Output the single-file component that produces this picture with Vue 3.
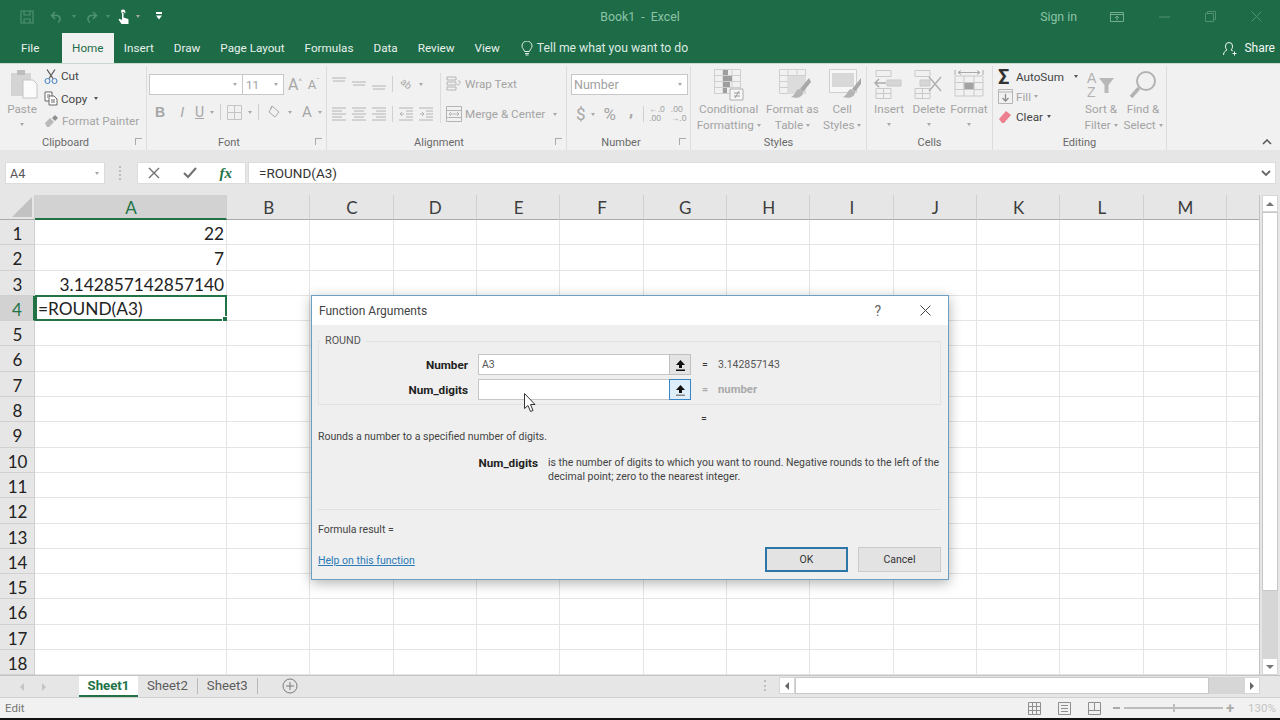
<script setup>
const columns = ['A', 'B', 'C', 'D', 'E', 'F', 'G', 'H', 'I', 'J', 'K', 'L', 'M', '']
const rows = Array.from({ length: 18 }, (_, i) => i + 1)
const values = { A1: '22', A2: '7', A3: '3.142857142857140' }
const tabs = ['Insert', 'Draw', 'Page Layout', 'Formulas', 'Data', 'Review', 'View']
</script>

<template>
  <div class="app">
    <header class="titlebar">
      <div class="qat">
        <svg class="q1" width="14" height="14" viewBox="0 0 14 14" fill="none" stroke="#4f9173" stroke-width="1.2"><path d="M1 1h12v12H1zM4 1v4h6V1M4 13V9h6v4" /></svg>
        <svg class="q2" width="14" height="12" viewBox="0 0 14 12" fill="none" stroke="#4f9173" stroke-width="1.6"><path d="M5 1 1.500 4.500 5 8M2 4.500h6a4 4 0 0 1 0 7" /></svg>
        <i class="caret dim q3"></i>
        <svg class="q4" width="14" height="12" viewBox="0 0 14 12" fill="none" stroke="#4f9173" stroke-width="1.6"><path d="M9 1l3.500 3.500L9 8M12 4.500H6a4 4 0 0 0 0 7" /></svg>
        <i class="caret dim q5"></i>
        <svg class="q6" width="12" height="16" viewBox="0 0 12 16" fill="#fff"><path d="M4 1.500a2.500 2.500 0 0 1 4 0l.5 2.500-1 .5V3.500a1.500 1.500 0 0 0-2 0v1l-1-.5zM5 4h1.500v4.500l4 1.200c.8.300 1 .8 1 1.500V15H4.500L1.500 10.500l1-.8L5 11z" /></svg>
        <i class="caret q7"></i>
        <svg class="q8" width="8" height="8" viewBox="0 0 8 8" fill="#fff"><path d="M1 0h6v2H1zM1 3.500h6L4 7.500z" /></svg>
      </div>
      <div class="doc-title">Book1 &nbsp;-&nbsp; Excel</div>
      <div class="win">
        <span class="sign">Sign in</span>
        <svg class="w1" width="14" height="10" viewBox="0 0 14 10" fill="none" stroke="#72ad92"><path d="M.5.500h13v9H.5zM.5 2.500h13M7 8.500V4M5 6l2-2 2 2" /></svg>
        <svg class="w2" width="11" height="2" viewBox="0 0 11 2"><path d="M0 1h11" stroke="#4f9173" /></svg>
        <svg class="w3" width="11" height="11" viewBox="0 0 11 11" fill="none" stroke="#4f9173"><path d="M.5 2.500h8v8h-8zM2.500 2.500v-2h8v8h-2" /></svg>
        <svg class="w4" width="11" height="11" viewBox="0 0 11 11" fill="none" stroke="#4f9173"><path d="M.5.500l10 10M10.500.500l-10 10" /></svg>
      </div>
    </header>

    <nav class="tabs">
      <span class="tab file">File</span>
      <span class="tab home">Home</span>
      <span v-for="t in tabs" :key="t" class="tab">{{ t }}</span>
      <span class="tell">
        <svg width="12" height="15" viewBox="0 0 12 15" fill="none" stroke="#dcebe3"><path d="M3.500 10.500C3 8 1 7.500 1 5a5 5 0 0 1 10 0c0 2.500-2 3-2.500 5.500zM4 12.500h4M4.500 14h3" /></svg>
        Tell me what you want to do
      </span>
      <span class="share">
        <svg width="15" height="15" viewBox="0 0 15 15" fill="none" stroke="#eef6f2"><path d="M.5 14c0-3 2-4.500 3.500-5C2.800 8 2.500 6.500 2.500 5a3.500 3.500 0 0 1 7 0c0 1.500-.3 3-1.500 4 1 .3 1.500.7 2 1M11.500 10.500v4M9.500 12.500h4" /></svg>
        Share
      </span>
    </nav>

    <section class="ribbon">
      <div class="group clipboard">
        <div class="body">
          <div class="big paste">
            <svg width="28" height="32" viewBox="0 0 28 32"><path d="M1 4h20v23H1z" fill="#d4d4d4" /><path d="M7 1h8v5H7z" fill="#bdbdbd" /><path d="M13 11h10l4 4v14H13z" fill="#fbfbfb" stroke="#c4c4c4" /></svg>
            <span class="off">Paste</span>
            <i class="caret off-caret"></i>
          </div>
          <div class="stack">
            <div class="mini on">
              <svg width="14" height="15" viewBox="0 0 14 15" fill="none" stroke="#5a5a5a"><path d="M3 .500l6 9M11 .500l-6 9" stroke-width="1.300" /><circle cx="3.500" cy="12" r="2.500" stroke="#3f7fc1" /><circle cx="10.500" cy="12" r="2.500" stroke="#3f7fc1" /></svg>
              Cut
            </div>
            <div class="mini on">
              <svg width="14" height="15" viewBox="0 0 14 15" fill="#fff" stroke="#666"><path d="M1 1h7v9H1z" /><path d="M5 5h5l3 3v6H5z" /><path d="M3 4h3M3 6h1M7 9h4M7 11h4" /></svg>
              Copy <i class="caret dark copy-caret"></i>
            </div>
            <div class="mini off">
              <svg width="15" height="14" viewBox="0 0 15 14"><path d="M1 9l5-5 4 4-5 5H3z" fill="#b9b9b9" /><path d="M8 4l3-3 3 3-3 3z" fill="#8f8f8f" /></svg>
              Format Painter
            </div>
          </div>
        </div>
        <div class="label">Clipboard<i class="launch"></i></div>
      </div>

      <div class="group font">
        <div class="body col">
          <div class="row r1">
            <div class="combo c-font"><i class="caret"></i></div>
            <div class="combo c-size"><span>11</span><i class="caret"></i></div>
            <span class="gl a-up">A<sup>^</sup></span>
            <span class="gl a-down">A<sup>ˇ</sup></span>
          </div>
          <div class="row r2">
            <b class="gl fb">B</b>
            <em class="gl fi">I</em>
            <u class="gl fu">U</u>
            <i class="caret"></i>
            <i class="sep"></i>
            <svg width="15" height="15" viewBox="0 0 15 15" fill="none" stroke="#c4c4c4"><path d="M.5.500h14v14H.5zM7.500.500v14M.5 7.500h14" /></svg>
            <i class="caret"></i>
            <i class="sep"></i>
            <svg class="bucket" width="14" height="14" viewBox="0 0 14 14" fill="none" stroke="#aaa"><path d="M4 1l7 6-4 5-6-5zM4 1l-1 3" /></svg>
            <i class="caret"></i>
            <span class="gl fa">A</span>
            <i class="caret"></i>
          </div>
        </div>
        <div class="label">Font<i class="launch"></i></div>
      </div>

      <div class="group align">
        <div class="body">
          <div class="col al-left">
            <div class="row al-r1">
              <svg class="ico-al" viewBox="0 0 14 14"><path d="M0 1h14M1 4h12" /></svg>
              <svg class="ico-al" viewBox="0 0 14 14"><path d="M0 5h14M1 8h12" /></svg>
              <svg class="ico-al" viewBox="0 0 14 14"><path d="M0 9h14M1 12h12" /></svg>
              <i class="sep"></i>
              <span class="orient">ab</span>
              <i class="caret"></i>
            </div>
            <div class="row al-r2">
              <svg class="ico-al" viewBox="0 0 14 14"><path d="M0 1h14M0 4h10M0 7h14M0 10h10M0 13h14" /></svg>
              <svg class="ico-al" viewBox="0 0 14 14"><path d="M0 1h14M2 4h10M0 7h14M2 10h10M0 13h14" /></svg>
              <svg class="ico-al" viewBox="0 0 14 14"><path d="M0 1h14M4 4h10M0 7h14M4 10h10M0 13h14" /></svg>
              <i class="sep"></i>
              <svg class="ico-al" viewBox="0 0 14 14"><path d="M0 1h14M7 4h7M7 7h7M7 10h7M0 13h14M5 7H1M3 5 1 7l2 2" /></svg>
              <svg class="ico-al" viewBox="0 0 14 14"><path d="M0 1h14M7 4h7M7 7h7M7 10h7M0 13h14M1 7h4M3 5l2 2-2 2" /></svg>
            </div>
          </div>
          <i class="vline"></i>
          <div class="col al-right">
            <div class="mini off wrap">
              <svg width="16" height="16" viewBox="0 0 16 16" fill="none" stroke="#b4b4b4"><path d="M1 1h9v3H1zM1 6h9v3H1zM1 11h9v3H1zM12 5c3-1 3 4-1 4" /></svg>
              Wrap Text
            </div>
            <div class="mini off merge">
              <svg width="16" height="16" viewBox="0 0 16 16" fill="none" stroke="#b4b4b4"><path d="M.5.500h15v15H.5zM.5 4.500h15M.5 11.500h15M3 8h10M5 6 3 8l2 2M11 6l2 2-2 2" /></svg>
              Merge &amp; Center <i class="caret merge-caret"></i>
            </div>
          </div>
        </div>
        <div class="label">Alignment<i class="launch"></i></div>
      </div>

      <div class="group number">
        <div class="body col">
          <div class="combo c-num"><span>Number</span><i class="caret"></i></div>
          <div class="row num-r2">
            <span class="gl dollar">$</span>
            <i class="caret"></i>
            <span class="gl pct">%</span>
            <b class="gl comma">,</b>
            <i class="sep"></i>
            <span class="decs"><span>←.0<br />.00</span><span>.00<br />→.0</span></span>
          </div>
        </div>
        <div class="label">Number<i class="launch"></i></div>
      </div>

      <div class="group styles">
        <div class="body">
          <div class="big b-cond">
            <svg width="30" height="32" viewBox="0 0 30 32"><path d="M.5.500h26v24H.5zM.5 6.500h26M.5 12.500h26M.5 18.500h26M9 .500v24M18 .500v24" fill="none" stroke="#cfcfcf" /><path d="M9 1h5v5H9zM9 7h9v5H9zM9 13h7v5H9zM9 19h4v5H9z" fill="#9e9e9e" /><path d="M16 20h13v11H16z" fill="#f6f6f6" stroke="#b0b0b0" /><path d="M20 24h6M20 27h6M25 22l-4 7" stroke="#9a9a9a" fill="none" /></svg>
            <span class="off">Conditional</span>
            <span class="off">Formatting <i class="caret"></i></span>
          </div>
          <div class="big b-table">
            <svg width="32" height="32" viewBox="0 0 32 32"><path d="M.5.500h26v24H.5zM.5 6.500h26M.5 12.500h26M.5 18.500h26M9 .500v24M18 .500v24" fill="none" stroke="#cfcfcf" /><path d="M9 7h18v18H9z" fill="#dcdcdc" /><path d="M30 9 21 20l3 3 8-10z" fill="#a8a8a8" /><path d="M20 20c-4 1-3 6-8 8 6 2 12 0 12-5z" fill="#b4b4b4" /></svg>
            <span class="off">Format as</span>
            <span class="off">Table <i class="caret"></i></span>
          </div>
          <div class="big b-cell">
            <svg width="32" height="32" viewBox="0 0 32 32"><path d="M.5.500h27v23H.5z" fill="#f6f6f6" stroke="#cfcfcf" /><path d="M3 4h22v14H3z" fill="#d8d8d8" /><path d="M32 9 23 20l3 3 6-8z" fill="#a8a8a8" /><path d="M22 20c-4 1-3 6-8 8 6 2 12 0 12-5z" fill="#b4b4b4" /></svg>
            <span class="off">Cell</span>
            <span class="off">Styles <i class="caret"></i></span>
          </div>
        </div>
        <div class="label">Styles</div>
      </div>

      <div class="group cells">
        <div class="body">
          <div class="big b-ins">
            <svg width="30" height="30" viewBox="0 0 30 30" fill="none" stroke="#c9c9c9"><path d="M2 .500h15v6H2zM2 18.500h15v10H2zM2 23.500h15M9.500 18.500v10" /><path d="M13 10h14v6H13z" fill="#d6d6d6" /><path d="M12 13H1M5 9l-4 4 4 4" stroke="#aaa" stroke-width="1.500" /></svg>
            <span class="off">Insert</span>
            <i class="caret off-caret"></i>
          </div>
          <div class="big b-del">
            <svg width="30" height="30" viewBox="0 0 30 30" fill="none" stroke="#c9c9c9"><path d="M1 .500h15v6H1zM1 18.500h15v10H1zM1 23.500h15M8.500 18.500v10" /><path d="M6 10h10v6H6z" fill="#d6d6d6" /><path d="M15 7l12 14M27 7 15 21" stroke="#b0b0b0" stroke-width="1.500" /></svg>
            <span class="off">Delete</span>
            <i class="caret off-caret"></i>
          </div>
          <div class="big b-fmt">
            <svg width="30" height="31" viewBox="0 0 30 31" fill="none" stroke="#c9c9c9"><path d="M1 .500v5M29 .500v5M4 3h22M7 1 4 3l3 2M23 1l3 2-3 2" stroke="#aaa" /><path d="M1 6.500h28v20H1zM1 13h28M1 20h28M10 6.500v20M20 6.500v20" /><path d="M10 13h10v7H10z" fill="#a2a2a2" /></svg>
            <span class="off">Format</span>
            <i class="caret off-caret"></i>
          </div>
        </div>
        <div class="label">Cells</div>
      </div>

      <div class="group editing">
        <div class="body">
          <div class="stack ed-stack">
            <div class="mini on auto">
              <span class="sigma">Σ</span> AutoSum <i class="caret dark auto-caret"></i>
            </div>
            <div class="mini off fill">
              <svg width="15" height="15" viewBox="0 0 15 15" fill="none" stroke="#b4b4b4"><path d="M.5.500h14v14H.5zM.5 3h14" /><path d="M7.500 5v7M4.500 9l3 3 3-3" stroke="#8d8d8d" stroke-width="1.300" /></svg>
              Fill <i class="caret"></i>
            </div>
            <div class="mini on clear">
              <svg width="14" height="14" viewBox="0 0 14 14"><path d="M1 9l7-8 5 4-7 8H4z" fill="#ee7f8e" /></svg>
              Clear <i class="caret dark"></i>
            </div>
          </div>
          <div class="big b-sort">
            <svg width="30" height="30" viewBox="0 0 30 30"><text x="1" y="13" class="az">A</text><text x="1" y="27" class="az">Z</text><path d="M13 8h15l-5.500 7v8H18.500v-8z" fill="#b8b8b8" /></svg>
            <span class="off">Sort &amp;</span>
            <span class="off">Filter <i class="caret"></i></span>
          </div>
          <div class="big b-find">
            <svg width="28" height="30" viewBox="0 0 28 30" fill="none"><circle cx="17" cy="11" r="9" stroke="#b2b2b2" stroke-width="2" /><path d="M10 18 2 27" stroke="#b2b2b2" stroke-width="3.500" /></svg>
            <span class="off">Find &amp;</span>
            <span class="off">Select <i class="caret"></i></span>
          </div>
        </div>
        <div class="label">Editing</div>
      </div>

      <div class="ribbon-rest">
        <svg width="10" height="6" viewBox="0 0 10 6" fill="none" stroke="#555" stroke-width="1.500"><path d="M1 5l4-4 4 4" /></svg>
      </div>
    </section>

    <div class="formula-bar">
      <div class="name-box">A4<i class="caret"></i></div>
      <div class="grip"></div>
      <div class="fx-box">
        <svg width="12" height="12" viewBox="0 0 12 12" fill="none" stroke="#707070" stroke-width="1.400"><path d="M1 1l10 10M11 1 1 11" /></svg>
        <svg width="14" height="12" viewBox="0 0 14 12" fill="none" stroke="#707070" stroke-width="2"><path d="M1 6l4 4 8-9" /></svg>
        <span class="fx">fx</span>
      </div>
      <div class="formula-input">
        =ROUND(A3)
        <svg width="10" height="7" viewBox="0 0 10 7" fill="none" stroke="#666" stroke-width="1.800"><path d="M1 1l4 4 4-4" /></svg>
      </div>
    </div>

    <div class="sheet">
      <div class="grid">
        <div class="corner"><i></i></div>
        <div v-for="c in columns" :key="c" class="col-head" :class="{ sel: c === 'A' }">{{ c }}</div>
        <template v-for="r in rows" :key="r">
          <div class="row-head" :class="{ sel: r === 4 }">{{ r }}</div>
          <div v-for="c in columns" :key="c + r" class="cell" :class="{ active: c === 'A' && r === 4 }">
            <template v-if="c === 'A' && r === 4">=ROUND(A3)<i class="handle"></i></template>
            <template v-else>{{ values[c + r] }}</template>
          </div>
        </template>
      </div>
      <div class="vscroll">
        <div class="sbtn"><i class="tri up"></i></div>
        <div class="thumb"></div>
        <div class="track"></div>
        <div class="sbtn"><i class="tri down"></i></div>
      </div>
    </div>

    <div class="sheet-tabs">
      <div class="nav-arrows"><i class="tri left"></i><i class="tri right"></i></div>
      <span class="stab current">Sheet1</span>
      <span class="stab">Sheet2</span>
      <span class="stab">Sheet3</span>
      <svg class="plus" width="16" height="16" viewBox="0 0 16 16" fill="none" stroke="#7a7a7a"><circle cx="8" cy="8" r="7" /><path d="M8 4v8M4 8h8" /></svg>
      <div class="hscroll">
        <div class="grip"></div>
        <div class="hbtn"><i class="tri left dark"></i></div>
        <div class="hthumb"></div>
        <div class="htrack"></div>
        <div class="hbtn"><i class="tri right dark"></i></div>
      </div>
    </div>

    <footer class="status">
      <span>Edit</span>
      <div class="views">
        <svg width="13" height="13" viewBox="0 0 13 13" fill="none" stroke="#8f8f8f"><path d="M.5.500h12v12H.5zM4.500.500v12M8.500.500v12M.5 4.500h12M.5 8.500h12" /></svg>
        <svg width="13" height="13" viewBox="0 0 13 13" fill="none" stroke="#8f8f8f"><path d="M.5.500h12v12H.5zM3 3.500h7M3 6.500h7M3 9.500h7" /></svg>
        <svg width="13" height="13" viewBox="0 0 13 13" fill="none" stroke="#8f8f8f"><path d="M.5.500h12v12H.5zM.5 8.500h12M6.500.500v8" /></svg>
      </div>
      <div class="zoom">
        <i class="z-minus"></i>
        <div class="z-slider"><i></i></div>
        <span class="z-plus">+</span>
        <span class="z-val">130%</span>
      </div>
    </footer>
    <div class="screen-edge"></div>

    <div class="dialog">
      <div class="dlg-head">
        <span>Function Arguments</span>
        <span class="help">?</span>
        <svg width="11" height="11" viewBox="0 0 11 11" fill="none" stroke="#444"><path d="M.5.500l10 10M10.500.500l-10 10" /></svg>
      </div>
      <div class="dlg-body">
        <fieldset class="args">
          <legend>ROUND</legend>
          <div class="arg">
            <label>Number</label>
            <div class="arg-input">A3</div>
            <div class="ref-btn">
              <svg width="11" height="12" viewBox="0 0 11 12"><path d="M5.500 1 10 6H7v3H4V6H1zM1 10.500h9V12H1z" fill="#111" /></svg>
            </div>
            <span class="eq">=</span>
            <span class="val">3.142857143</span>
          </div>
          <div class="arg">
            <label>Num_digits</label>
            <div class="arg-input"></div>
            <div class="ref-btn focus">
              <svg width="11" height="12" viewBox="0 0 11 12"><path d="M5.500 1 10 6H7v3H4V6H1z" fill="#111" /><path d="M1 10.500h9V12H1z" fill="#888" /></svg>
            </div>
            <span class="eq grey">=</span>
            <span class="val grey">number</span>
          </div>
        </fieldset>
        <div class="total-eq">=</div>
        <p class="summary">Rounds a number to a specified number of digits.</p>
        <div class="detail">
          <b>Num_digits</b>
          <p>is the number of digits to which you want to round. Negative rounds to the left of the decimal point; zero to the nearest integer.</p>
        </div>
        <div class="divider"></div>
        <div class="result">Formula result =</div>
        <div class="dlg-foot">
          <a class="help-link">Help on this function</a>
          <button class="btn primary">OK</button>
          <button class="btn">Cancel</button>
        </div>
      </div>
    </div>

    <svg class="cursor" width="13" height="19" viewBox="0 0 13 19"><path d="M.5.500v15l3.500-3 2.500 6 2.500-1-2.500-6H11z" fill="#fff" stroke="#333" /></svg>
  </div>
</template>

<style>
html, body { margin: 0; padding: 0; background: #000; }
</style>

<style scoped>
.app {
  position: relative;
  width: 1280px;
  height: 720px;
  overflow: hidden;
  display: flex;
  flex-direction: column;
  font-family: Roboto, "Liberation Sans", sans-serif;
  font-size: 12px;
  color: #444;
  background: #e6e6e6;
}

/* shared bits */
.caret {
  display: inline-block;
  width: 0;
  height: 0;
  border: 2.5px solid transparent;
  border-top: 3px solid #a8a8a8;
  border-bottom: 0;
  vertical-align: middle;
}
.caret.dark { border-top-color: #555; }
.caret.dim { border-top-color: #4f9173; }
.sep { display: inline-block; width: 1px; height: 16px; background: #d0d0d0; }
.vline { display: block; width: 1px; height: 50px; background: #dcdcdc; }
.off { color: #a4a4a4; }
.on { color: #444; }
.gl { color: #a6a6a6; }

/* title bar */
.titlebar {
  height: 33px;
  background: #1e6b47;
  display: grid;
  grid-template-columns: 1fr auto 1fr;
  align-items: center;
  flex: none;
}
.qat { display: flex; align-items: center; padding-left: 20px; }
.q2 { margin-left: 16px; }
.q3 { margin-left: 8px; }
.q4 { margin-left: 8px; }
.q5 { margin-left: 8px; }
.q6 { margin-left: 7px; }
.q7 { margin-left: 7px; }
.q8 { margin-left: 15px; margin-top: -2px; }
.doc-title { color: #8cc4a9; font-size: 12.3px; }
.win { display: flex; align-items: center; justify-content: flex-end; padding-right: 18px; }
.sign { color: #8cc4a9; font-size: 12.3px; margin-right: 33px; }
.w2 { margin-left: 35px; }
.w3 { margin-left: 35px; }
.w4 { margin-left: 35px; }

/* tab row */
.tabs {
  height: 30px;
  background: #1e6b47;
  display: flex;
  align-items: center;
  flex: none;
  color: #e7f1ec;
  font-size: 11.7px;
}
.tab { height: 30px; line-height: 31px; padding: 0 10px; }
.file { margin-left: 11px; margin-right: 12.500px; }
.home { width: 52px; padding: 0; box-sizing: border-box; text-align: center; background: #f1f1f1; color: #1e6b47; }
.tell { display: flex; align-items: center; gap: 4px; margin-left: 11px; color: #dcebe3; font-size: 12.2px; }
.share { display: flex; align-items: center; gap: 6px; margin-left: auto; padding-right: 5px; color: #f1f7f4; font-size: 12px; }

/* ribbon */
.ribbon {
  height: 87px;
  background: #f1f1f1;
  border-top: 1px solid #c9d9d0;
  box-sizing: border-box;
  display: flex;
  flex: none;
  font-size: 11.7px;
}
.group {
  box-sizing: border-box;
  display: flex;
  flex-direction: column;
  border-right: 1px solid #dcdcdc;
  height: 84px;
  margin-top: 2px;
}
.body { flex: 1; display: flex; min-height: 0; }
.col { display: flex; flex-direction: column; }
.row { display: flex; align-items: center; }
.label { position: relative; height: 16px; line-height: 17px; text-align: center; color: #6a6a6a; font-size: 11px; }
.clipboard .label, .font .label, .align .label, .number .label { padding-right: 15px; }
.launch {
  position: absolute;
  right: 4px;
  top: 4px;
  width: 6px;
  height: 6px;
  border-left: 1px solid #aaa;
  border-top: 1px solid #aaa;
}
.big { display: flex; flex-direction: column; align-items: center; line-height: 16px; white-space: nowrap; }
.big svg { height: 32px; flex: none; }
.off-caret { margin-top: 6px; }
.stack { display: flex; flex-direction: column; }
.mini { display: flex; align-items: center; gap: 3px; white-space: nowrap; }

.clipboard { width: 147px; }
.paste { width: 44px; margin-top: 3px; }
.paste svg { margin-left: 4px; }
.clipboard .stack { padding-top: 1px; gap: 4.5px; }
.clipboard .mini { height: 18px; }
.copy-caret { margin-left: 4px; }

.font { width: 180px; }
.font .body { padding: 8px 0 0 2px; }
.r1 { height: 21px; }
.combo {
  position: relative;
  box-sizing: border-box;
  background: #fff;
  border: 1px solid #c8c8c8;
  height: 21px;
  display: flex;
  align-items: center;
  justify-content: flex-end;
  padding-right: 5px;
  color: #a0a0a0;
}
.c-font { width: 94px; }
.c-size { width: 41px; border-left: 0; justify-content: space-between; padding-left: 3px; }
.a-up { font-size: 16px; margin-left: 4px; }
.a-down { font-size: 13px; margin-left: 6px; }
.gl sup { font-size: 8px; line-height: 0; }
.r2 { margin-top: 8px; height: 18px; padding-left: 6px; gap: 6px; }
.fb { font-size: 14px; font-family: "Liberation Sans", sans-serif; }
.fi { font-size: 14px; font-family: "Liberation Sans", sans-serif; margin-left: 9px; }
.fu { font-size: 14px; margin-left: 5px; }
.bucket { margin-left: 3px; }
.fa { font-size: 15px; margin-left: 4px; }

.align { width: 240px; }
.align .body { padding-left: 5px; padding-top: 7px; }
.al-left { width: 108px; }
.al-r1 { height: 22px; gap: 6px; }
.al-r2 { height: 22px; gap: 6px; margin-top: 8px; }
.ico-al { width: 14px; height: 14px; fill: none; stroke: #b4b4b4; stroke-width: 1; }
.orient { display: block; width: 14px; text-align: center; font-size: 10px; line-height: 14px; color: #a6a6a6; transform: rotate(40deg); }
.al-right { padding-left: 5px; }
.wrap { height: 22px; }
.merge { height: 22px; margin-top: 8px; }
.merge-caret { margin-left: 5px; }

.number { width: 124px; }
.number .body { padding: 8px 0 0 4px; }
.c-num { width: 117px; justify-content: space-between; padding-left: 2px; font-size: 12.5px; }
.num-r2 { margin-top: 8px; padding-left: 5px; gap: 5px; height: 22px; }
.dollar { font-size: 17px; }
.pct { font-size: 17px; margin-left: 4px; }
.comma { font-size: 17px; margin-left: 8px; margin-top: -8px; }
.num-r2 .sep { margin-left: 5px; }
.decs { display: flex; flex: none; gap: 6px; font-family: "Liberation Sans", sans-serif; font-size: 8.5px; line-height: 9px; color: #a0a0a0; white-space: nowrap; }

.styles { width: 176px; }
.styles .body { padding-top: 3px; }
.b-cond { width: 76px; }
.b-table { width: 52px; }
.b-cell { width: 48px; }
.b-table svg, .b-cell svg { margin-left: 6px; }

.cells { width: 126px; }
.cells .body { padding-top: 3px; padding-left: 2px; }
.cells .big { width: 40px; }

.editing { width: 174px; }
.editing .body { padding-top: 3px; padding-left: 5px; }
.ed-stack { width: 80px; margin-top: -2px; gap: 1px; }
.auto { height: 19px; gap: 5px; }
.auto-caret { margin-left: 5px; }
.sigma { color: #333; font-size: 20px; line-height: 18px; font-weight: 700; width: 13px; }
.fill { height: 19px; gap: 3px; }
.clear { height: 19px; gap: 4px; }
.b-sort { width: 46px; }
.b-find { width: 38px; }
.az { fill: #b2b2b2; font-size: 14px; font-family: "Liberation Sans", sans-serif; }
.ribbon-rest { flex: 1; display: flex; justify-content: flex-end; align-items: flex-end; padding: 0 8px 5px 0; }

/* formula bar */
.formula-bar {
  height: 45px;
  box-sizing: border-box;
  padding: 12px 4px 11px 5px;
  display: flex;
  align-items: stretch;
  flex: none;
  background: #e6e6e6;
  font-size: 12.5px;
}
.name-box {
  width: 100px;
  box-sizing: border-box;
  background: #fff;
  border: 1px solid #dcdcdc;
  display: flex;
  align-items: center;
  justify-content: space-between;
  padding: 0 5px 0 4px;
  color: #555;
}
.grip { width: 2px; margin: 4px 14px; border-left: 2px dotted #bdbdbd; }
.fx-box {
  width: 109px;
  box-sizing: border-box;
  background: #fff;
  border: 1px solid #dcdcdc;
  display: flex;
  align-items: center;
  justify-content: space-between;
  padding: 0 13px 0 10px;
}
.fx { font-family: "Liberation Serif", serif; font-style: italic; color: #217346; font-size: 15px; font-weight: 700; }
.formula-input {
  flex: 1;
  margin-left: 2px;
  background: #fff;
  border: 1px solid #dcdcdc;
  display: flex;
  align-items: center;
  justify-content: space-between;
  padding: 0 4px 0 10px;
  color: #333;
  font-size: 13.5px;
}

/* sheet */
.sheet { height: 480px; display: flex; flex: none; background: #fff; }
.grid {
  width: 1260px;
  height: 480px;
  overflow: hidden;
  display: grid;
  grid-template-columns: 35px 192px repeat(12, 83.33px) 33px;
  grid-template-rows: 25px repeat(18, 25.3px);
  font-family: Lato, "Liberation Sans", sans-serif;
  color: #222;
  box-sizing: border-box;
  border-right: 1px solid #c4c4c4;
}
.corner { background: #e6e6e6; border-right: 1px solid #cfcfcf; border-bottom: 1px solid #aaa; position: relative; }
.corner i {
  position: absolute;
  right: 2px;
  bottom: 2px;
  width: 0;
  height: 0;
  border-left: 20px solid transparent;
  border-bottom: 20px solid #c2c2c2;
}
.col-head {
  background: #e6e6e6;
  border-right: 1px solid #d0d0d0;
  border-bottom: 1px solid #aaa;
  box-sizing: border-box;
  text-align: center;
  font-size: 17px;
  line-height: 25px;
  color: #3d3d3d;
  padding-left: 1px;
}
.col-head.sel { background: #d2d2d2; color: #217346; border-bottom: 2px solid #217346; }
.row-head {
  background: #e6e6e6;
  border-right: 1px solid #cfcfcf;
  border-bottom: 1px solid #d0d0d0;
  box-sizing: border-box;
  text-align: center;
  font-size: 17px;
  line-height: 27px;
  padding-left: 1px;
}
.row-head.sel { background: #d2d2d2; color: #217346; border-right: 2px solid #217346; }
.cell {
  position: relative;
  box-sizing: border-box;
  border-right: 1px solid #e4e4e4;
  border-bottom: 1px solid #e4e4e4;
  text-align: right;
  padding-right: 2px;
  font-size: 17.3px;
  line-height: 27px;
  white-space: nowrap;
}
.cell.active {
  border: 2px solid #217346;
  text-align: left;
  padding: 0 0 0 1px;
  line-height: 24px;
  margin-top: -1px;
}
.handle {
  position: absolute;
  right: -3px;
  bottom: -3px;
  width: 4px;
  height: 4px;
  background: #217346;
  border: 1px solid #fff;
}
.vscroll {
  flex: 1;
  background: #e6e6e6;
  padding: 0 2px 0 2px;
  display: flex;
  flex-direction: column;
}
.sbtn {
  height: 17px;
  background: #fff;
  border: 1px solid #d6d6d6;
  box-sizing: border-box;
  display: flex;
  align-items: center;
  justify-content: center;
}
.thumb { height: 379px; background: #fff; border: 1px solid #c8c8c8; box-sizing: border-box; }
.track { flex: 1; background: #d6d6d6; }
.tri { display: block; width: 0; height: 0; border: 4px solid transparent; }
.tri.up { border-bottom: 4px solid #777; border-top: 0; }
.tri.down { border-top: 4px solid #777; border-bottom: 0; }
.tri.left { border-right: 4px solid #c4c4c4; border-left: 0; }
.tri.right { border-left: 4px solid #c4c4c4; border-right: 0; }
.tri.left.dark { border-right-color: #666; }
.tri.right.dark { border-left-color: #666; }

/* sheet tabs */
.sheet-tabs {
  height: 22px;
  flex: none;
  display: flex;
  align-items: stretch;
  background: #e6e6e6;
  border-top: 1px solid #c4c4c4;
  box-sizing: border-box;
  font-size: 13.2px;
  color: #5c5c5c;
}
.nav-arrows { width: 79px; box-sizing: border-box; display: flex; align-items: center; gap: 18px; padding-left: 20px; }
.stab {
  padding: 0 9px;
  line-height: 20px;
  position: relative;
}
.stab + .stab { border-right: 1px solid #b8b8b8; margin: 2px 0 3px; line-height: 16px; }
.stab.current {
  width: 59px;
  box-sizing: border-box;
  text-align: center;
  padding: 0;
  background: #fff;
  color: #217346;
  font-weight: 700;
  border-bottom: 2px solid #217346;
}
.plus { margin: 2px 0 0 24px; }
.hscroll { margin-left: auto; width: 520px; padding-right: 20px; box-sizing: border-box; display: flex; align-items: stretch; padding-top: 1px; padding-bottom: 3px; }
.hscroll .grip { margin: 3px 11px 3px auto; }
.hbtn { width: 16px; flex: none; background: #fff; border: 1px solid #d6d6d6; box-sizing: border-box; display: flex; align-items: center; justify-content: center; }
.hthumb { width: 414px; flex: none; background: #fff; border: 1px solid #c8c8c8; box-sizing: border-box; }
.htrack { width: 35px; flex: none; background: #d6d6d6; }

/* status bar */
.status {
  height: 21px;
  flex: none;
  box-sizing: border-box;
  background: #f1f1f1;
  border-top: 1px solid #d0d0d0;
  display: flex;
  align-items: center;
  padding-left: 5px;
  font-size: 11.5px;
  color: #777;
}
.views { display: flex; gap: 17px; margin-left: auto; }
.zoom { display: flex; align-items: center; margin-left: 12px; width: 167px; }
.z-minus { width: 7px; height: 2px; background: #aaa; }
.z-slider { position: relative; width: 99px; height: 2px; background: #bdbdbd; margin-left: 4px; }
.z-slider i { position: absolute; left: 49px; top: -3px; width: 2px; height: 8px; background: #bdbdbd; }
.z-plus { font-size: 15px; color: #aaa; margin-left: 3px; font-weight: 700; width: 12px; }
.z-val { color: #c4c4c4; margin-left: 10px; font-size: 11.5px; }
.screen-edge { flex: 1; background: #111; }

/* dialog */
.dialog {
  position: absolute;
  left: 311px;
  top: 295px;
  width: 638px;
  height: 285px;
  box-sizing: border-box;
  border: 1px solid #6d9fc4;
  box-shadow: 0 3px 12px rgba(0, 0, 0, 0.3);
  background: #efefef;
  font-size: 10.5px;
  color: #333;
  display: flex;
  flex-direction: column;
}
.dlg-head {
  height: 29px;
  flex: none;
  background: #fff;
  display: flex;
  align-items: center;
  padding: 0 17px 0 7px;
  font-size: 12px;
  color: #444;
}
.help { margin-left: auto; margin-right: 39px; font-size: 14px; color: #666; }
.dlg-body { flex: 1; padding: 9px 7px 0 6px; display: flex; flex-direction: column; }
.args {
  margin: 0;
  padding: 6px 0 4px;
  border: 1px solid #e2e2e2;
  height: 71px;
  box-sizing: border-box;
}
.args legend { padding: 0 5px; margin-left: 1px; line-height: 14px; color: #555; font-size: 10.8px; }
.arg { display: flex; align-items: center; height: 21px; margin-bottom: 4px; }
.arg label { width: 149px; text-align: right; font-weight: 700; color: #222; margin-right: 10px; font-size: 11.7px; }
.arg-input {
  width: 191px;
  height: 21px;
  box-sizing: border-box;
  background: #fff;
  border: 1px solid #c6c6c6;
  border-right: 0;
  padding-left: 3px;
  line-height: 19px;
  color: #555;
}
.ref-btn {
  width: 22px;
  height: 21px;
  box-sizing: border-box;
  background: #e4e4e4;
  border: 1px solid #c0c0c0;
  display: flex;
  align-items: center;
  justify-content: center;
}
.ref-btn.focus { background: #dfeefb; border-color: #3a85c4; }
.eq { margin-left: 11px; width: 16px; }
.val { color: #555; }
.grey { color: #aaa; font-weight: 700; }
.val.grey { font-size: 11.3px; }
.total-eq { height: 14px; line-height: 14px; margin: 7px 0 0 383px; }
.summary { margin: 4px 0 0; line-height: 14px; color: #444; }
.detail { display: flex; margin-top: 12px; }
.detail b { width: 220px; text-align: right; color: #222; flex: none; line-height: 14px; font-size: 11.7px; }
.detail p { margin: 0 0 0 10px; line-height: 14px; color: #444; }
.divider { height: 1px; background: #e0e0e0; margin-top: 25px; }
.result { margin-top: 13px; line-height: 14px; color: #444; }
.dlg-foot { display: flex; align-items: center; margin-top: 10px; gap: 10px; }
.help-link { color: #2a7ab8; text-decoration: underline; margin-right: auto; margin-top: 2px; }
.btn {
  width: 83px;
  height: 25px;
  background: #e3e3e3;
  border: 1px solid #cbcbcb;
  font: inherit;
  color: #333;
  padding: 0;
}
.btn.primary { border: 2px solid #2f76a8; }

.cursor { position: absolute; left: 524px; top: 393px; }
</style>
